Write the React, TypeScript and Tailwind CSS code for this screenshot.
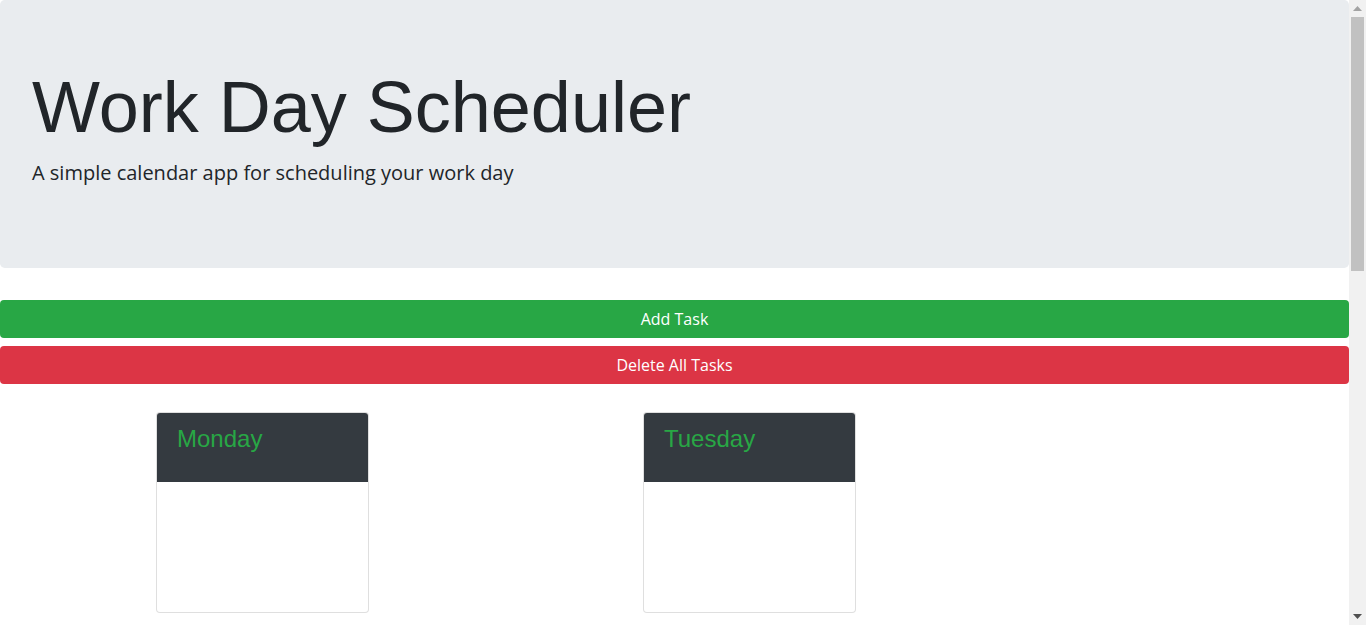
import React from "react";

const days = ["Monday", "Tuesday"];

function DayCard({ name }: { name: string }) {
  return (
    <div className="w-[213px] h-[201px] flex flex-col border border-[rgba(0,0,0,0.125)] rounded-[4px] bg-white overflow-hidden">
      <div className="h-[69px] bg-[#343a40] px-[20px] pt-[12px]">
        <h4 className="text-[24px] leading-[28.8px] text-[#28a745] font-['Liberation_Sans',Arial,sans-serif]">
          {name}
        </h4>
      </div>
      <div className="flex-1" />
    </div>
  );
}

function FakeScrollbar() {
  return (
    <div className="fixed top-0 right-0 w-[17px] h-[625px] bg-[#f1f1f1] flex flex-col items-center">
      <div className="h-[17px] w-full flex items-center justify-center">
        <svg width="9" height="5" viewBox="0 0 9 5">
          <polygon points="0,5 4.5,0 9,5" fill="#a3a3a3" />
        </svg>
      </div>
      <div className="w-[13px] h-[254px] bg-[#c1c1c1]" />
      <div className="flex-1" />
      <div className="h-[17px] w-full flex items-center justify-center">
        <svg width="9" height="5" viewBox="0 0 9 5">
          <polygon points="0,0 9,0 4.5,5" fill="#505050" />
        </svg>
      </div>
    </div>
  );
}

export default function App() {
  return (
    <div className="h-[625px] overflow-hidden bg-white text-[#212529] font-['Open_Sans',sans-serif] text-[16px]">
      <div className="w-[1349px]">
        <div className="bg-[#e9ecef] rounded-[4.8px] px-[32px] pt-[64px] pb-[64px] mb-[32px]">
          <h1 className="text-[72px] leading-[86.4px] mb-[8px] font-['Liberation_Sans',Arial,sans-serif] text-[#212529]">
            Work Day Scheduler
          </h1>
          <p className="text-[20px] leading-[30px] mb-[16px] font-['Open_Sans',sans-serif]">
            A simple calendar app for scheduling your work day
          </p>
        </div>
        <div className="flex flex-col gap-[8px]">
          <button className="w-full h-[38px] bg-[#28a745] text-white rounded-[4px] text-[16px] leading-[24px]">
            Add Task
          </button>
          <button className="w-full h-[38px] bg-[#dc3545] text-white rounded-[4px] text-[16px] leading-[24px]">
            Delete All Tasks
          </button>
        </div>
        <div className="flex flex-wrap pl-[156px] pt-[28px] gap-x-[274px] gap-y-[48px]">
          {days.map((d) => (
            <DayCard key={d} name={d} />
          ))}
        </div>
      </div>
      <FakeScrollbar />
    </div>
  );
}
